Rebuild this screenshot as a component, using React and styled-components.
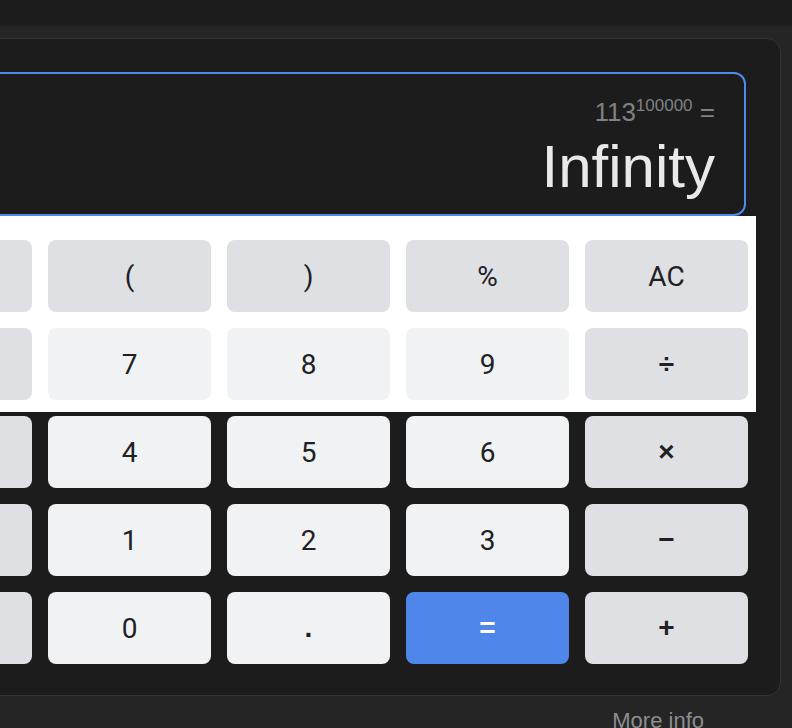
import React from "react";
import styled, { createGlobalStyle } from "styled-components";

const GlobalStyle = createGlobalStyle`
  html, body {
    margin: 0;
    background: #252525;
    overflow: hidden;
  }
  #root {
    width: 792px;
    height: 728px;
    overflow: hidden;
  }
`;

// first column (x!, ln, log...) sits off the left edge, so no labels there
const rows = [
  [
    { label: "", kind: "op" },
    { label: "(", kind: "op" },
    { label: ")", kind: "op" },
    { label: "%", kind: "op" },
    { label: "AC", kind: "op" },
  ],
  [
    { label: "", kind: "op" },
    { label: "7", kind: "num" },
    { label: "8", kind: "num" },
    { label: "9", kind: "num" },
    { label: "÷", kind: "op", heavy: true },
  ],
  [
    { label: "", kind: "op" },
    { label: "4", kind: "num" },
    { label: "5", kind: "num" },
    { label: "6", kind: "num" },
    { label: "×", kind: "op", heavy: true },
  ],
  [
    { label: "", kind: "op" },
    { label: "1", kind: "num" },
    { label: "2", kind: "num" },
    { label: "3", kind: "num" },
    { label: "−", kind: "op", heavy: true },
  ],
  [
    { label: "", kind: "op" },
    { label: "0", kind: "num" },
    { label: ".", kind: "num", heavy: true },
    { label: "=", kind: "eq", heavy: true },
    { label: "+", kind: "op", heavy: true },
  ],
];

const colors = {
  op: { bg: "#dfe0e4", fg: "#202124" },
  num: { bg: "#f1f2f4", fg: "#202124" },
  eq: { bg: "#4f86ea", fg: "#ffffff" },
};

function App() {
  return (
    <>
      <GlobalStyle />
      <TopStrip />
      <Main>
        <Card>
          <Display>
            <Expression>
              113<sup>100000</sup> =
            </Expression>
            <Result>Infinity</Result>
          </Display>
          <Highlight>
            <Keys>
              {rows.slice(0, 2).flat().map((k, i) => (
                <Key key={i} $kind={k.kind} $heavy={k.heavy}>
                  {k.label}
                </Key>
              ))}
            </Keys>
          </Highlight>
          <Keys>
            {rows.slice(2).flat().map((k, i) => (
              <Key key={i} $kind={k.kind} $heavy={k.heavy}>
                {k.label}
              </Key>
            ))}
          </Keys>
        </Card>
        <MoreInfo>More info</MoreInfo>
      </Main>
    </>
  );
}

const TopStrip = styled.div`
  height: 26px;
  background: #1c1c1c;
`;

const Main = styled.main`
  padding-top: 12px;
  display: flex;
  flex-direction: column;
`;

const Card = styled.section`
  margin: 0 11px 0 -166px;
  padding: 33px 32px 31px 34px;
  background: #1c1c1c;
  border: 1px solid #343434;
  border-radius: 14px;
  display: flex;
  flex-direction: column;
`;

const Display = styled.div`
  margin-right: 2px;
  height: 144px;
  box-sizing: border-box;
  padding: 22px 29px 0 0;
  border: 2px solid #5489ec;
  border-radius: 12px;
  text-align: right;
  font-family: "Liberation Sans", Arial, sans-serif;
`;

const Expression = styled.div`
  font-size: 26px;
  line-height: 32px;
  color: #7f8184;

  sup {
    font-size: 17px;
    line-height: 0;
    vertical-align: 10px;
  }
`;

const Result = styled.div`
  margin-top: 3px;
  font-size: 60px;
  line-height: 72px;
  color: #e9e9e9;
`;

const Highlight = styled.div`
  background: #ffffff;
  margin: 0 -8px 4px 0;
  padding: 24px 8px 12px 0;
`;

const Keys = styled.div`
  display: grid;
  grid-template-columns: repeat(5, 1fr);
  gap: 16px;
`;

const Key = styled.button`
  height: 72px;
  border: none;
  border-radius: 8px;
  padding: 0;
  background: ${(p) => colors[p.$kind].bg};
  color: ${(p) => colors[p.$kind].fg};
  font-family: ${(p) =>
    p.$heavy ? `"Liberation Sans", Arial, sans-serif` : `Roboto, "Liberation Sans", sans-serif`};
  font-size: 28px;
  font-weight: ${(p) => (p.$heavy ? 700 : 400)};
  display: flex;
  align-items: center;
  justify-content: center;
`;

const MoreInfo = styled.div`
  margin: 12px 88px 0 0;
  align-self: flex-end;
  font-family: "Liberation Sans", Arial, sans-serif;
  font-size: 22px;
  color: #8b8d90;
`;

export default App;
